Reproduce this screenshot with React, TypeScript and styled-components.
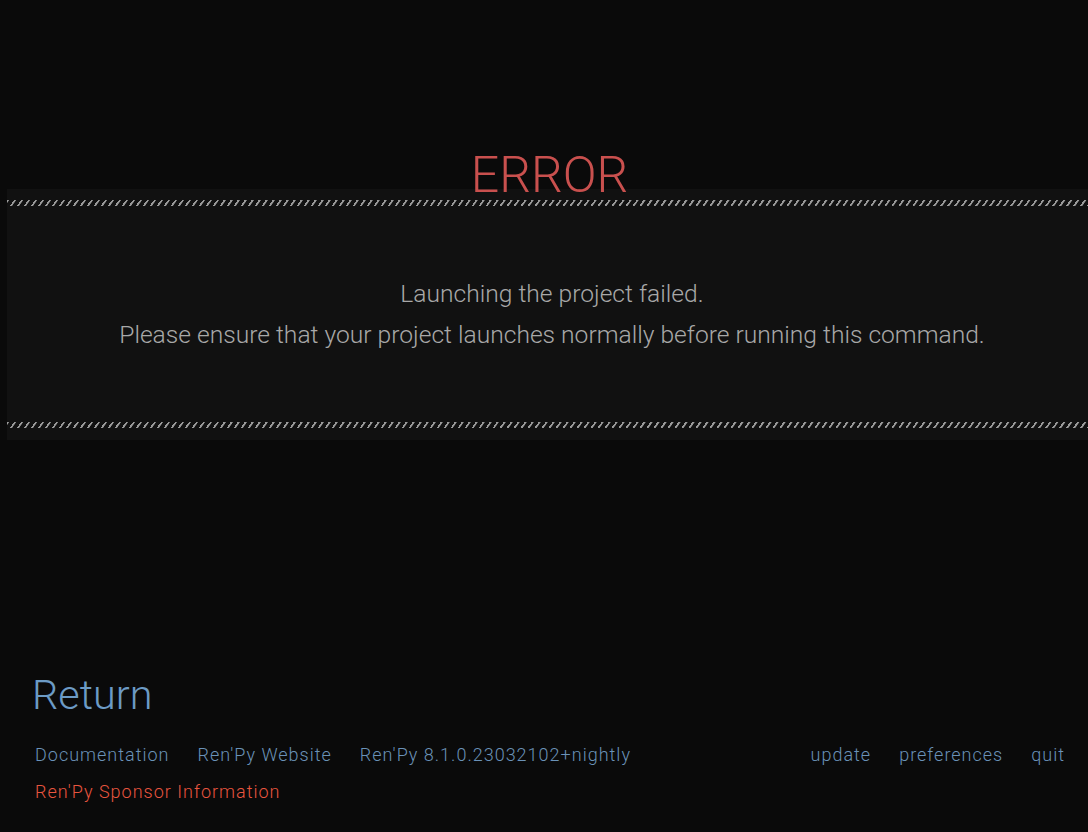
import styled, { createGlobalStyle } from 'styled-components';

const GlobalStyle = createGlobalStyle`
  html, body {
    margin: 0;
    padding: 0;
    background: #0a0a0a;
  }
  body {
    font-family: Roboto, "Noto Sans", "Liberation Sans", sans-serif;
    font-weight: 300;
  }
`;

const Page = styled.div`
  display: flex;
  flex-direction: column;
  height: 832px;
  background: #0a0a0a;
  overflow: hidden;
`;

const Title = styled.h1`
  margin: 150px 0 0 0;
  padding-left: 11px;
  font-size: 50px;
  font-weight: 300;
  line-height: 50px;
  text-align: center;
  color: #c9504e;
  position: relative;
  z-index: 1;
`;

const Panel = styled.section`
  margin: -11px 0 0 7px;
  padding: 11px 0 12px 0;
  background: #111111;
`;

const Stripe = styled.div`
  height: 6px;
  background: repeating-linear-gradient(
    125deg,
    #9a9a9a 0,
    #9a9a9a 1.4px,
    transparent 2.2px,
    transparent 5.73px
  );
`;

const Message = styled.div`
  padding: 67px 0 67px 9px;
  text-align: center;
  color: #a8a8a8;
  font-size: 24.6px;
  line-height: 41px;
`;

const Spacer = styled.div`
  flex: 1;
`;

const Footer = styled.footer`
  display: flex;
  flex-direction: column;
  padding: 0 23px 22px 35px;
`;

const ReturnLink = styled.div`
  font-size: 41.4px;
  line-height: 40px;
  color: #6c9bc5;
  margin: 0 0 21px -3px;
`;

const LinkRow = styled.div`
  display: flex;
  align-items: center;
  justify-content: space-between;
`;

const LinkGroup = styled.div`
  display: flex;
  gap: 28px;
`;

const Link = styled.span<{ $accent?: boolean }>`
  font-size: 18px;
  line-height: 37px;
  letter-spacing: 1px;
  color: ${(p) => (p.$accent ? '#e8553f' : '#6a92b8')};
  white-space: nowrap;
`;

const App = () => {
  return (
    <>
      <GlobalStyle />
      <Page>
        <Title>ERROR</Title>
        <Panel>
          <Stripe />
          <Message>
            Launching the project failed.
            <br />
            Please ensure that your project launches normally before running this command.
          </Message>
          <Stripe />
        </Panel>
        <Spacer />
        <Footer>
          <ReturnLink>Return</ReturnLink>
          <LinkRow>
            <LinkGroup>
              <Link>Documentation</Link>
              <Link>Ren'Py Website</Link>
              <Link>Ren'Py 8.1.0.23032102+nightly</Link>
            </LinkGroup>
            <LinkGroup>
              <Link>update</Link>
              <Link>preferences</Link>
              <Link>quit</Link>
            </LinkGroup>
          </LinkRow>
          <LinkRow>
            <Link $accent>Ren'Py Sponsor Information</Link>
          </LinkRow>
        </Footer>
      </Page>
    </>
  );
};

export default App;
